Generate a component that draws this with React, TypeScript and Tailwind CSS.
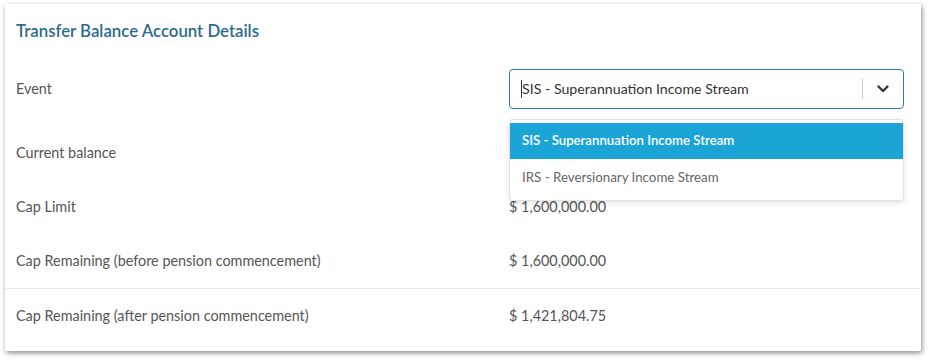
import React from 'react';

const rows = [
  { label: 'Current balance', value: '' },
  { label: 'Cap Limit', value: '$ 1,600,000.00' },
  { label: 'Cap Remaining (before pension commencement)', value: '$ 1,600,000.00' },
];

const Chevron = () => (
  <svg width="14" height="14" viewBox="0 0 14 14" fill="none">
    <path d="M2.5 4.5 L7 9 L11.5 4.5" stroke="#333" strokeWidth="2.4" strokeLinecap="round" strokeLinejoin="round" />
  </svg>
);

export default function App() {
  return (
    <div className="bg-white w-[930px] h-[361px] pt-[4px] pl-[5px]" style={{ fontFamily: 'Lato, "Open Sans", sans-serif' }}>
      <div className="w-[916px] h-[347px] bg-white shadow-[1px_2px_5px_rgba(0,0,0,0.45)] flex flex-col">
        <div className="pl-[11px] pt-[15px] h-[48px]">
          <h2 className="text-[16.8px] leading-[24px] font-semibold text-[#2a6b8c]">Transfer Balance Account Details</h2>
        </div>

        {/* Event */}
        <div className="grid grid-cols-[493px_395px] items-center pl-[11px] h-[74px]">
          <span className="text-[14.4px] text-[#555]">Event</span>
          <div className="relative">
            <div className="h-[40px] border border-[#2d7db3] rounded-[4px] flex items-center bg-white">
              <div className="flex-1 flex items-center pl-[11px]">
                <span className="w-px h-[18px] bg-[#333]" />
                <span className="text-[14.2px] text-[#333]">SIS - Superannuation Income Stream</span>
              </div>
              <span className="w-px h-[20px] bg-[#ccc]" />
              <div className="w-[40px] flex items-center justify-center">
                <Chevron />
              </div>
            </div>
            <div className="absolute left-0 right-0 top-[50px] z-10 bg-white border border-[#e2e2e2] rounded-[4px] shadow-[0_2px_6px_rgba(0,0,0,0.12)] py-[3px]">
              <div className="h-[36px] bg-[#1ba5d6] flex items-center pl-[12px] text-[13.2px] font-semibold text-white">
                SIS - Superannuation Income Stream
              </div>
              <div className="h-[38px] flex items-center pl-[12px] text-[13.3px] text-[#666]">
                IRS - Reversionary Income Stream
              </div>
            </div>
          </div>
        </div>

        {rows.map((r) => (
          <div key={r.label} className="grid grid-cols-[493px_395px] items-center pl-[11px] h-[54px]">
            <span className="text-[14.4px] text-[#555]">{r.label}</span>
            <span className="text-[14.4px] text-[#555]">{r.value}</span>
          </div>
        ))}

        <div className="border-t border-[#eaeaea] grid grid-cols-[493px_395px] items-center pl-[11px] h-[54px]">
          <span className="text-[14.4px] text-[#555]">Cap Remaining (after pension commencement)</span>
          <span className="text-[14.4px] text-[#555]">$ 1,421,804.75</span>
        </div>
      </div>
    </div>
  );
}
